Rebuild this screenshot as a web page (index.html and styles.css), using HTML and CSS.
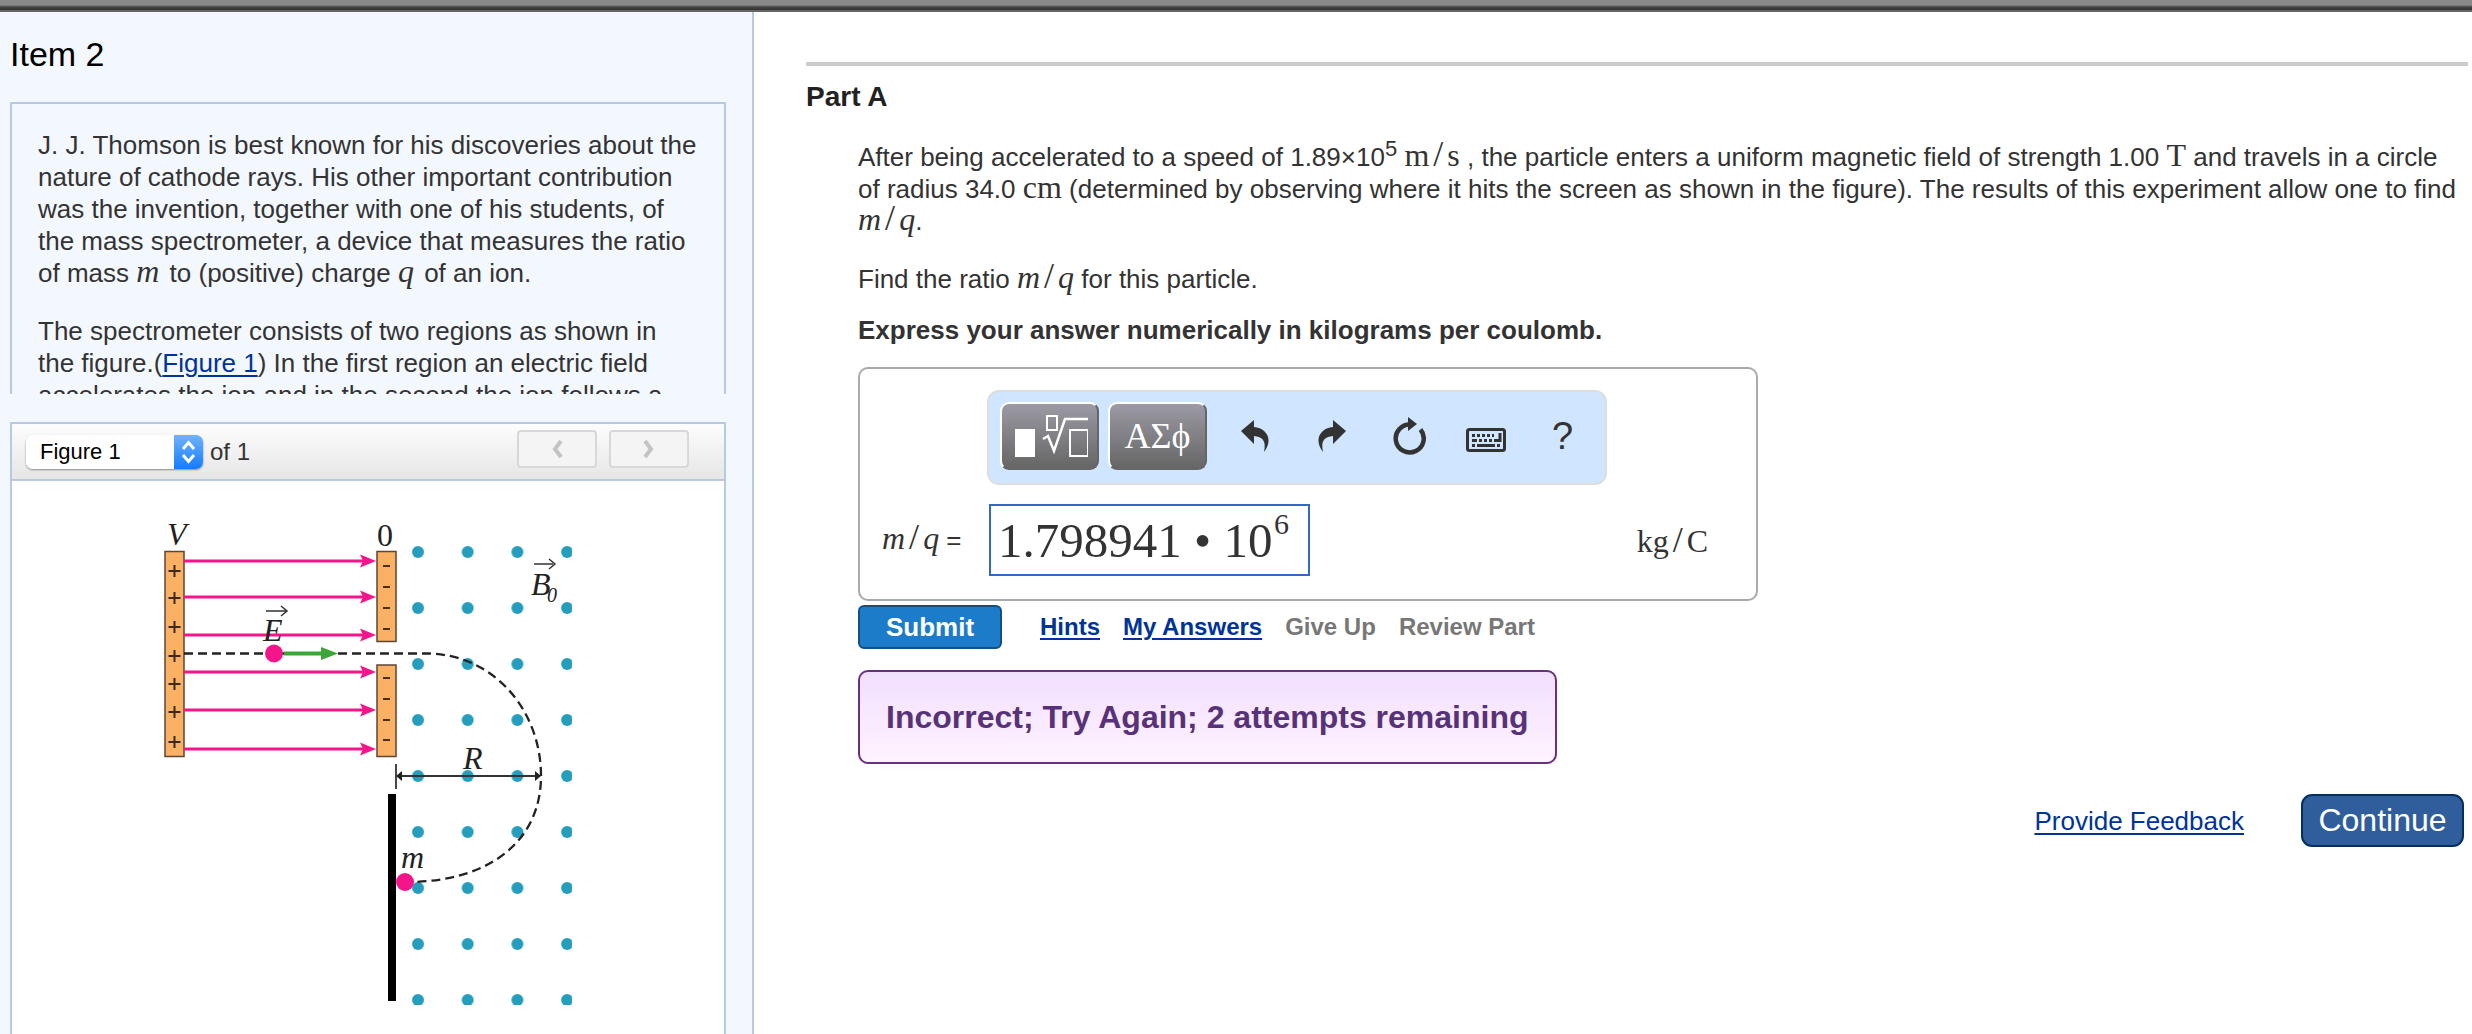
FILE: index.html
```html
<!DOCTYPE html>
<html lang="en">
<head>
<meta charset="utf-8">
<title>Item 2</title>
<link rel="stylesheet" href="styles.css">
</head>
<body>
<div class="topbar"></div>
<div class="layout">
  <aside class="side">
    <h1 class="item-title">Item 2</h1>
    <section class="intro">
      <p>J. J. Thomson is best known for his discoveries about the nature of cathode rays. His other important contribution was the invention, together with one of his students, of the mass spectrometer, a device that measures the ratio of mass <i class="math var">m</i> to (positive) charge <i class="math var">q</i> of an ion.</p>
      <p>The spectrometer consists of two regions as shown in the figure.(<a href="#figure">Figure 1</a>) In the first region an electric field accelerates the ion and in the second the ion follows a circular arc.</p>
    </section>
    <section class="figure-box" id="figure">
      <div class="figure-bar">
        <div class="picker">
          <select class="figure-select" id="figure-select" aria-label="Figure"><option>Figure 1</option></select>
          <svg class="picker-arrows" viewBox="0 0 29 34" aria-hidden="true"><path d="M9 14l5.500-6.500L20 14M9 20l5.500 6.500L20 20" fill="none" stroke="#fff" stroke-width="3"/></svg>
        </div>
        <label for="figure-select">of 1</label>
        <div class="pager">
          <button class="page-btn" type="button" aria-label="Previous figure" disabled><svg viewBox="0 0 12 20"><path d="M10 2L4 10l6 8" fill="none" stroke="#c4c4c4" stroke-width="4"/></svg></button>
          <button class="page-btn" type="button" aria-label="Next figure" disabled><svg viewBox="0 0 12 20"><path d="M2 2l6 8-6 8" fill="none" stroke="#c4c4c4" stroke-width="4"/></svg></button>
        </div>
      </div>
      <svg class="diagram" viewBox="164 510 408 495" role="img" aria-label="Mass spectrometer">
        <defs>
          <pattern id="dots" x="393" y="524" width="49.7" height="56" patternUnits="userSpaceOnUse"><circle cx="25" cy="28" r="6" fill="#259dbd"/></pattern>
          <g id="field"><path d="M184 0H364" stroke="#f5158a" stroke-width="3"/><path d="M360-6.500L376 0 360 6.500 363 0z" fill="#f5158a"/></g>
          <g id="plus"><path d="M168.500 0h12M174.500-6v12" stroke="#3b2a1c" stroke-width="2"/></g>
          <g id="minus"><path d="M383 0h7" stroke="#4b3018" stroke-width="2"/></g>
        </defs>
        <rect x="402" y="540" width="180" height="480" fill="url(#dots)"/>
        <g fill="#fab163" stroke="#5c4634" stroke-width="1.500">
          <rect x="165" y="551.500" width="19" height="205"/>
          <rect x="377" y="551.500" width="19" height="90"/>
          <rect x="377" y="665" width="19" height="91.500"/>
        </g>
        <use href="#plus" y="571"/><use href="#plus" y="598"/><use href="#plus" y="627"/><use href="#plus" y="656"/><use href="#plus" y="684"/><use href="#plus" y="712"/><use href="#plus" y="742"/>
        <use href="#minus" y="566"/><use href="#minus" y="587"/><use href="#minus" y="608"/><use href="#minus" y="629"/><use href="#minus" y="678"/><use href="#minus" y="699"/><use href="#minus" y="720"/><use href="#minus" y="740"/>
        <use href="#field" y="561"/><use href="#field" y="597"/><use href="#field" y="635"/><use href="#field" y="672"/><use href="#field" y="710"/><use href="#field" y="749"/>
        <path d="M184 653.500H430C496 656 541 712 541 776C541 838 494 880 412 882" fill="none" stroke="#222" stroke-width="2.300" stroke-dasharray="9 5"/>
        <path d="M284 653.500h40" stroke="#3ba535" stroke-width="4"/><path d="M321 647l17 6.500-17 6.500z" fill="#3ba535"/>
        <circle cx="274" cy="653.500" r="9" fill="#f5158a"/>
        <path d="M396 764v25M398 776H540" stroke="#333" stroke-width="1.800"/>
        <path d="M396 776l6-5v10zM541 776l-6-5v10z" fill="#222"/>
        <rect x="388" y="794" width="8" height="207" fill="#000"/>
        <circle cx="405" cy="882" r="9" fill="#f5158a"/>
        <g fill="none" stroke="#333" stroke-width="1.500"><path d="M266 611h20M281 606l6 5-6 5M534 564h19M549 559l6 5-6 5"/></g>
        <g class="fig-text">
          <text x="167" y="545">V</text><text x="263" y="641">E</text><text x="531" y="595">B</text><text class="fig-sub" x="547" y="602">0</text>
          <text x="463" y="769">R</text><text x="401" y="868">m</text><text class="fig-upright" x="377" y="546">0</text>
        </g>
      </svg>
    </section>
  </aside>
  <main class="main">
    <h2 class="part-title">Part A</h2>
    <div class="part">
      <p>After being accelerated to a speed of 1.89×10<sup>5</sup> <span class="math">m<span class="slash">/</span>s</span> , the particle enters a uniform magnetic field of strength 1.00 <span class="math">T</span> and travels in a circle of radius 34.0 <span class="math">cm</span> (determined by observing where it hits the screen as shown in the figure). The results of this experiment allow one to find <i class="math">m<span class="slash">/</span>q</i>.</p>
      <p>Find the ratio <i class="math">m<span class="slash">/</span>q</i> for this particle.</p>
      <p class="express">Express your answer numerically in kilograms per coulomb.</p>
      <form class="answer">
        <div class="toolbar">
          <button class="palette" type="button" aria-label="Templates"><svg width="76" height="46" viewBox="0 0 76 46" fill="none" stroke="#fff" stroke-width="2"><rect x="3" y="16" width="20" height="28" fill="#fff" stroke="none"/><rect x="35" y="3" width="10" height="14"/><rect x="58" y="17" width="18" height="26"/><path d="M31 26l5-3 6 15L53 6h24" stroke-width="2.500"/></svg></button>
          <button class="palette" type="button">ΑΣϕ</button>
          <div class="tools">
            <button class="tool" type="button" aria-label="Undo"><svg width="28" height="32" viewBox="0 0 28 32"><path d="M0 11L13 0v7C25 8 33 19 23 32C25 22 23 17 13 16v8z"/></svg></button>
            <button class="tool" type="button" aria-label="Redo"><svg width="28" height="32" viewBox="0 0 28 32"><path d="M28 11L15 0v7C3 8-5 19 5 32C3 22 5 17 15 16v8z"/></svg></button>
            <button class="tool" type="button" aria-label="Reset"><svg width="34" height="38" viewBox="0 0 34 38"><path d="M19 7.500A14 14 0 1 0 28.500 12.500" fill="none" stroke="#333" stroke-width="4.500"/><path d="M16 0l9 7-9 7z"/></svg></button>
            <button class="tool tool-low" type="button" aria-label="Keyboard"><svg width="40" height="24" viewBox="0 0 40 24"><rect x="1.500" y="1.500" width="37" height="21" rx="2" fill="none" stroke="#333" stroke-width="3"/><path d="M6 7.500h22M6 17.500h3M31 17.500h3" fill="none" stroke="#333" stroke-width="3" stroke-dasharray="3 2"/><path d="M6 12.500h5M13 12.500h3M18 12.500h3M23 12.500h3M28 12.500h6V5M11 17.500h18" fill="none" stroke="#333" stroke-width="3"/></svg></button>
            <button class="tool" type="button" aria-label="Help">?</button>
          </div>
        </div>
        <div class="answer-row">
          <label class="answer-label" for="value"><i class="math">m<span class="slash">/</span>q</i> =</label>
          <div class="field">
            <input class="field-base" id="value" type="text" value="1.798941 • 10">
            <input class="field-exp" type="text" value="6" aria-label="Exponent">
          </div>
          <span class="math unit">kg<span class="slash">/</span>C</span>
        </div>
      </form>
      <div class="actions">
        <button class="submit" type="button">Submit</button>
        <a href="#hints">Hints</a>
        <a href="#answers">My Answers</a>
        <span>Give Up</span>
        <span>Review Part</span>
      </div>
      <div class="feedback" role="status">Incorrect; Try Again; 2 attempts remaining</div>
    </div>
    <footer class="footer">
      <a href="#feedback">Provide Feedback</a>
      <button class="continue" type="button">Continue</button>
    </footer>
  </main>
</div>
</body>
</html>
```

FILE: styles.css
```css
* { box-sizing: border-box; }

body {
  margin: 0;
  height: 100vh;
  overflow: hidden;
  display: flex;
  flex-direction: column;
  background: #fff;
  color: #333;
  font: 26px/32px "Liberation Sans", Arial, sans-serif;
}

button, input, select { font-family: inherit; margin: 0; }
a { color: #003399; text-underline-offset: 3px; text-decoration-thickness: 2px; }
p { margin: 0 0 26px; }

.math { font-family: "Liberation Serif", "Times New Roman", serif; font-size: 32px; line-height: 20px; }
.slash { font-size: 36px; font-style: normal; margin: 0 4px; }
.var { margin-right: 3px; }
sup { font-size: 22px; line-height: 0; vertical-align: 10px; }

.topbar {
  flex: none;
  height: 12px;
  background: linear-gradient(#888 0 5px, #444 7px, #333 10px, #666 10px 12px);
}

.layout { flex: 1; min-height: 0; display: flex; }

.side {
  flex: none;
  width: 754px;
  padding: 22px 26px 0 10px;
  display: flex;
  flex-direction: column;
  background: #f3f8ff;
  border-right: 2px solid #b9cade;
}

.item-title { margin: 0 0 28px; font-size: 34px; line-height: 40px; font-weight: 400; color: #000; }

.intro {
  flex: none;
  height: 292px;
  overflow: hidden;
  margin-bottom: 28px;
  padding: 25px 26px 0 26px;
  border: 2px solid #b9cade;
  border-bottom: 0;
}

.figure-box {
  flex: 1;
  min-height: 0;
  overflow: hidden;
  background: #fff;
  border: 2px solid #b9cade;
  border-bottom: 0;
}

.figure-bar {
  height: 57px;
  padding: 0 35px 0 14px;
  display: flex;
  align-items: center;
  gap: 7px;
  font-size: 24px;
  background: linear-gradient(#fdfdfd, #e6e6e6);
  border-bottom: 2px solid #b9cade;
}

.picker {
  display: flex;
  width: 177px;
  height: 34px;
  border-radius: 7px;
  overflow: hidden;
  background: #fff;
  box-shadow: 0 1px 2px #888;
}

.figure-select {
  flex: 1;
  appearance: none;
  padding: 0 14px;
  border: 0;
  background: #fff;
  color: #000;
  font-size: 22px;
}

.picker-arrows { width: 29px; height: 34px; background: linear-gradient(#6fb3fa, #147bff); }

.pager { display: flex; gap: 12px; margin: 0 0 6px auto; }

.page-btn {
  width: 80px;
  height: 38px;
  padding: 0;
  display: flex;
  align-items: center;
  justify-content: center;
  background: #f4f4f4;
  border: 2px solid #d8d8d8;
  border-radius: 4px;
}
.page-btn svg { width: 12px; height: 20px; }

.diagram { display: block; width: 408px; margin: 29px auto 0; }
.fig-text { font: italic 32px "Liberation Serif", serif; fill: #222; }
.fig-sub { font-size: 20px; }
.fig-upright { font-style: normal; }

.main { flex: 1; min-width: 0; padding: 50px 4px 0 52px; }

.part-title {
  margin: 0;
  padding: 13px 0 22px;
  border-top: 4px solid #ccc;
  color: #222;
  font-size: 28px;
  line-height: 36px;
}

.part { padding: 4px 4px 0 52px; }
.express { margin-bottom: 21px; margin-top: -7px; font-weight: 700; }

.answer {
  max-width: 900px;
  height: 234px;
  padding: 21px 48px 0 22px;
  border: 2px solid #aaa;
  border-radius: 10px;
}

.toolbar {
  width: 620px;
  height: 95px;
  margin-left: 105px;
  padding: 10px 0 10px 11px;
  display: flex;
  gap: 9px;
  background: #d0e5ff;
  border: 2px solid #ddd;
  border-radius: 12px;
}

.palette {
  flex: none;
  width: 99px;
  height: 68px;
  padding: 0;
  display: flex;
  align-items: center;
  justify-content: center;
  border: 2px solid;
  border-color: #fff #666 #666 #fff;
  border-radius: 9px;
  background: linear-gradient(#9c9aa4, #666);
  color: #fff;
  font: 36px "Liberation Serif", serif;
}

.tools { display: flex; flex: none; height: 68px; }

.tool {
  width: 77px;
  padding: 0;
  display: flex;
  align-items: center;
  justify-content: center;
  border: 0;
  background: none;
  color: #333;
  fill: #333;
  font-size: 38px;
}
.tool-low { padding-top: 8px; }

.answer-row { display: flex; align-items: center; margin-top: 19px; }
.answer-label { width: 107px; white-space: nowrap; }

.field {
  width: 321px;
  height: 72px;
  display: flex;
  padding-left: 7px;
  border: 2px solid #3468c8;
}

.field input {
  padding: 0;
  border: 0;
  outline: 0;
  background: none;
  color: #333;
  font-family: "Liberation Serif", "Times New Roman", serif;
}
.field-base { width: 276px; font-size: 49px; }
.field .field-exp { width: 24px; height: 36px; font-size: 30px; }

.unit { margin-left: auto; }

.actions {
  display: flex;
  align-items: center;
  gap: 23px;
  margin: 4px 0 21px;
  color: #777;
  font-size: 24px;
  font-weight: 700;
}

.submit {
  width: 144px;
  height: 44px;
  margin-right: 15px;
  padding: 0;
  border: 2px solid #125081;
  border-radius: 6px;
  background: #1d7cca;
  color: #fff;
  font-size: 26px;
  font-weight: 700;
}

.feedback {
  width: fit-content;
  padding: 25px 26px;
  border: 2px solid #68307f;
  border-radius: 10px;
  background: linear-gradient(#f1dfff, #fff3ff);
  color: #573278;
  font-size: 32px;
  line-height: 40px;
  font-weight: 700;
}

.footer {
  display: flex;
  justify-content: flex-end;
  align-items: center;
  gap: 57px;
  margin: 30px 4px 0 0;
}

.continue {
  width: 163px;
  height: 53px;
  padding: 0;
  border: 2px solid #03305f;
  border-radius: 11px;
  background: #305d9b;
  color: #fff;
  font-size: 32px;
}
```
